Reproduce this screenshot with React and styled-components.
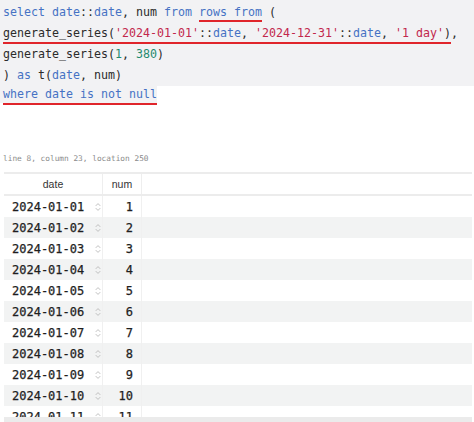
import React from "react";
import styled, { createGlobalStyle } from "styled-components";

const Global = createGlobalStyle`
  html, body { margin: 0; padding: 0; background: #ffffff; }
  body { width: 474px; height: 422px; overflow: hidden; }
`;

const Page = styled.div`
  width: 474px;
  height: 422px;
  display: flex;
  flex-direction: column;
  overflow: hidden;
`;

const Code = styled.div`
  font-family: "DejaVu Sans Mono", monospace;
  font-size: 11.63px;
  color: #2b2b2b;
  white-space: pre;
`;

const CodeArea = styled.div`
  background: #f2f2f4;
  padding: 2px 0 0 3px;
`;

const Line = styled.div`
  height: 21px;
  line-height: 21px;
`;

const LastLine = styled.div`
  padding-left: 3px;
  height: 21px;
`;

const Highlight = styled.span`
  display: inline-block;
  background: #f2f2f4;
  margin-left: -3px;
  padding-left: 3px;
  height: 17px;
  line-height: 17px;
`;

const K = styled.span`
  color: #4672c4;
`;
const S = styled.span`
  color: #c2284c;
`;
const N = styled.span`
  color: #1f8a6e;
`;

const Mark = styled.span`
  text-decoration: underline;
  text-decoration-color: #e0252b;
  text-decoration-thickness: 2px;
  text-underline-offset: ${(p) => p.$offset || "4px"};
`;

const Status = styled.div`
  margin-top: 46px;
  padding-left: 3px;
  font-family: "DejaVu Sans Mono", monospace;
  font-size: 7.8px;
  color: #8a8a8a;
  height: 12px;
  line-height: 12px;
`;

const Table = styled.div`
  margin: 7px 2px 0 4px;
  display: flex;
  flex-direction: column;
  flex: 1;
  min-height: 0;
`;

const Grid = styled.div`
  display: grid;
  grid-template-columns: 99px 39px 1fr;
`;

const Header = styled(Grid)`
  height: 20px;
  border-top: 2px solid #ececec;
  border-bottom: 2px solid #ececec;
  font-family: "Liberation Sans", Arial, sans-serif;
  font-size: 10.5px;
  color: #333;
`;

const HeadCell = styled.div`
  display: flex;
  align-items: center;
  justify-content: center;
  border-right: ${(p) => (p.$last ? "none" : "1px solid #eeeeee")};
`;

const Viewport = styled.div`
  flex: 1;
  min-height: 0;
  overflow: hidden;
`;

const Row = styled(Grid)`
  height: 21px;
  background: ${(p) => (p.$striped ? "#f2f3f3" : "#ffffff")};
  font-family: "DejaVu Sans Mono", monospace;
  font-size: 12px;
  color: #1e1e1e;
`;

const DateCell = styled.div`
  display: flex;
  align-items: center;
  padding-left: 8px;
  gap: 11px;
  border-right: 1px solid #f0f0f0;
  -webkit-text-stroke: 0.25px #1e1e1e;
`;

const NumCell = styled.div`
  display: flex;
  align-items: center;
  justify-content: flex-end;
  padding-right: 8px;
  border-right: 1px solid #f0f0f0;
  -webkit-text-stroke: 0.25px #1e1e1e;
`;

const Filler = styled.div``;

const Scrollbar = styled.div`
  height: 5px;
  background: #ebebeb;
  margin: 0 2px 0 4px;
`;

const Spinner = () => (
  <svg width="6" height="10" viewBox="0 0 6 10" fill="none">
    <path d="M1 3.6 L3 1.6 L5 3.6" stroke="#b9b9b9" strokeWidth="0.9" strokeLinecap="round" strokeLinejoin="round" />
    <path d="M1 6.4 L3 8.4 L5 6.4" stroke="#b9b9b9" strokeWidth="0.9" strokeLinecap="round" strokeLinejoin="round" />
  </svg>
);

const rows = Array.from({ length: 11 }, (_, i) => ({
  date: `2024-01-${String(i + 1).padStart(2, "0")}`,
  num: i + 1,
}));

export default function App() {
  return (
    <Page>
      <Global />
      <Code>
        <CodeArea>
          <Line>
            <K>select</K> <K>date</K>::<K>date</K>, num <K>from</K>{" "}
            <Mark><K>rows</K> <K>from</K></Mark> (
          </Line>
          <Line>
            <Mark $offset="5px">
              generate_series(<S>'2024-01-01'</S>::<K>date</K>, <S>'2024-12-31'</S>::<K>date</K>, <S>'1 day'</S>)
            </Mark>
            ,
          </Line>
          <Line>
            generate_series(<N>1</N>, <N>380</N>)
          </Line>
          <Line>
            ) <K>as</K> t(<K>date</K>, num)
          </Line>
        </CodeArea>
        <LastLine>
          <Highlight>
            <Mark $offset="5px">
              <K>where date is not null</K>
            </Mark>
          </Highlight>
        </LastLine>
      </Code>
      <Status>line 8, column 23, location 250</Status>
      <Table>
        <Header>
          <HeadCell>date</HeadCell>
          <HeadCell>num</HeadCell>
          <HeadCell $last />
        </Header>
        <Viewport>
          {rows.map((r, i) => (
            <Row key={r.date} $striped={i % 2 === 1}>
              <DateCell>
                {r.date}
                <Spinner />
              </DateCell>
              <NumCell>{r.num}</NumCell>
              <Filler />
            </Row>
          ))}
        </Viewport>
      </Table>
      <Scrollbar />
    </Page>
  );
}
